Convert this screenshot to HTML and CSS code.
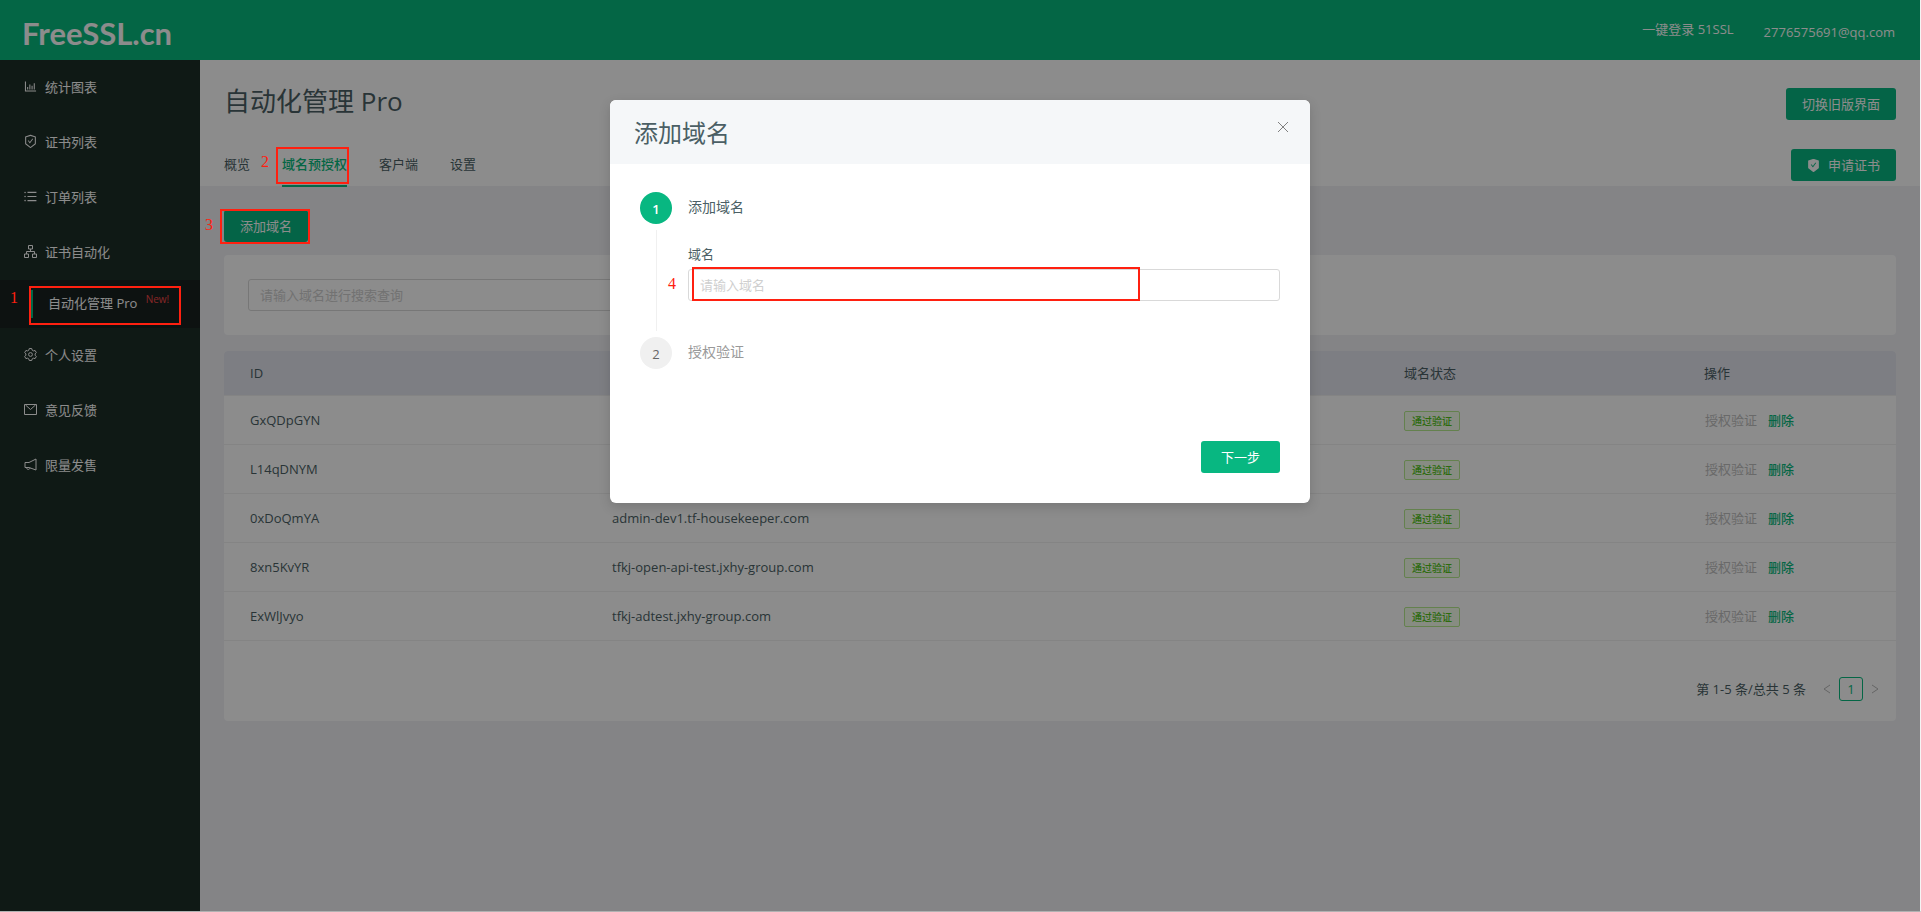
FILE: index.html
```
<!DOCTYPE html>
<html lang="zh-CN">
<head>
    <meta charset="UTF-8">
    <meta name="viewport" content="width=device-width, initial-scale=1.0">
    <title>自动化管理 Pro - FreeSSL.cn</title>
    <link rel="stylesheet" href="styles.css">
</head>
<body>
    <header class="top-nav">
        <a class="logo" href="#">FreeSSL.cn</a>
        <div class="top-links">
            <a class="login-link" href="#">一键登录 51SSL</a>
            <a class="user-link" href="#">2776575691@qq.com</a>
        </div>
    </header>

    <div class="layout">
        <nav class="sidebar">
            <a href="#">
                <svg class="icon" viewBox="64 64 896 896"><path d="M888 792H200V168c0-4-4-8-8-8h-56c-4 0-8 4-8 8v688c0 4 4 8 8 8h752c4 0 8-4 8-8v-56c0-4-4-8-8-8zM280 552h72v160h-72zM432 376h72v336h-72zM584 454h72v258h-72zM736 296h72v416h-72z"/></svg>
                统计图表
            </a>
            <a href="#">
                <svg class="icon" viewBox="64 64 896 896"><path d="M866.9 169.9L527.1 54.1C523 52.7 517.5 52 512 52s-11 .7-15.1 2.1L157.1 169.9c-8.3 2.8-15.1 12.4-15.1 21.2v482.4c0 8.8 5.7 20.4 12.6 25.9L499.3 968c3.5 2.7 8 4.1 12.6 4.1s9.2-1.4 12.6-4.1l344.7-268.6c6.9-5.4 12.6-17 12.6-25.9V191.1c.2-8.8-6.6-18.3-14.9-21.2zM810 654.3L512 886.5 214 654.3V226.7l298-101.6 298 101.6v427.6zm-405.8-201c-3-4.1-7.8-6.6-13-6.6H336c-6.500 0-10.300 7.400-6.500 12.700l126.400 174a16.100 16.100 0 0 0 26 0l212.600-292.700c3.800-5.300 0-12.700-6.500-12.700h-55.200c-5.100 0-10 2.500-13 6.600L468.900 542.400l-64.700-89.100z"/></svg>
                证书列表
            </a>
            <a href="#">
                <svg class="icon" viewBox="64 64 896 896"><path d="M304 192h616v72H304zM304 476h616v72H304zM304 760h616v72H304z"/><circle cx="136" cy="228" r="52"/><circle cx="136" cy="512" r="52"/><circle cx="136" cy="796" r="52"/></svg>
                订单列表
            </a>
            <a href="#">
                <svg class="icon icon-line" viewBox="0 0 13 13"><path d="M4.500 .5h4v3.500h-4zM.5 9h4v3.500h-4zM8.500 9h4v3.500h-4zM6.500 4v2.500M2.500 9V6.500h8V9"/></svg>
                证书自动化
            </a>
            <div class="sub-item">
                <a href="#">自动化管理 Pro <sup>New!</sup></a>
                <span class="mark mark-menu"></span>
                <span class="mark-no no-menu">1</span>
            </div>
            <a href="#">
                <svg class="icon icon-line" viewBox="0 0 13 13"><path d="M5.300 .5h2.400l.5 1.700 1.200.7 1.700-.4 1.200 2.100-1.200 1.300v1.300l1.200 1.300-1.200 2.100-1.700-.4-1.200.7-.5 1.600H5.300l-.5-1.600-1.200-.7-1.700.4-1.200-2.100 1.200-1.300V5.900L.7 4.600l1.200-2.100 1.700.4 1.200-.7z"/><circle cx="6.500" cy="6.500" r="1.900"/></svg>
                个人设置
            </a>
            <a href="#">
                <svg class="icon icon-line" viewBox="0 0 13 13"><path d="M.5 1.500h12v10H.5zM1.500 2l5 4.500 5-4.500"/></svg>
                意见反馈
            </a>
            <a href="#">
                <svg class="icon icon-line" viewBox="0 0 13 13"><path d="M12 1v11L5 9.500H1v-5h4zM2.500 9.500c0 2.300 3.200 2.600 3.500.4"/></svg>
                限量发售
            </a>
        </nav>

        <main class="main">
            <div class="page-head">
                <div class="title-row">
                    <h1>自动化管理 Pro</h1>
                    <button class="btn" type="button">切换旧版界面</button>
                </div>
                <div class="tab-row">
                    <div class="tabs">
                        <a href="#">概览</a>
                        <a class="active" href="#">域名预授权<span class="mark mark-tab"></span><span class="mark-no no-tab">2</span></a>
                        <a href="#">客户端</a>
                        <a href="#">设置</a>
                    </div>
                    <button class="btn" type="button">
                        <svg class="btn-icon" viewBox="64 64 896 896"><path fill-rule="evenodd" d="M866.9 169.9L527.1 54.1c-8-3-22-3-30.2 0L157.1 169.9c-8.3 2.8-15.1 12.4-15.1 21.2v482.4c0 8.8 5.7 20.4 12.6 25.9L499.3 968c7 5.500 18 5.500 25.200 0l344.700-268.600c6.900-5.400 12.600-17 12.600-25.900V191.100c.2-8.800-6.600-18.300-14.900-21.200zM694.500 340.700L481.900 633.400c-6 9-20 9-26 0l-126.400-174c-3.800-5.300 0-12.700 6.500-12.700h55.200c5.200 0 10 2.500 13 6.600l64.700 89.100 150.900-207.800c3-4.100 7.900-6.600 13-6.600H688c6.500 0 10.300 7.400 6.500 12.700z"/></svg>
                        申请证书
                    </button>
                </div>
            </div>

            <div class="content">
                <div class="toolbar">
                    <button class="btn" type="button">添加域名</button>
                    <span class="mark mark-add"></span>
                    <span class="mark-no no-add">3</span>
                </div>

                <div class="card search-card">
                    <input class="input search-input" type="text" placeholder="请输入域名进行搜索查询" aria-label="搜索域名">
                </div>

                <div class="card">
                    <table class="domain-table">
                        <colgroup>
                            <col class="col-id">
                            <col>
                            <col class="col-status">
                            <col class="col-action">
                        </colgroup>
                        <thead>
                            <tr><th>ID</th><th>域名</th><th>域名状态</th><th>操作</th></tr>
                        </thead>
                        <tbody>
                            <tr>
                                <td>GxQDpGYN</td>
                                <td></td>
                                <td><span class="tag">通过验证</span></td>
                                <td><div class="actions"><button type="button" disabled>授权验证</button><button type="button">删除</button></div></td>
                            </tr>
                            <tr>
                                <td>L14qDNYM</td>
                                <td></td>
                                <td><span class="tag">通过验证</span></td>
                                <td><div class="actions"><button type="button" disabled>授权验证</button><button type="button">删除</button></div></td>
                            </tr>
                            <tr>
                                <td>0xDoQmYA</td>
                                <td>admin-dev1.tf-housekeeper.com</td>
                                <td><span class="tag">通过验证</span></td>
                                <td><div class="actions"><button type="button" disabled>授权验证</button><button type="button">删除</button></div></td>
                            </tr>
                            <tr>
                                <td>8xn5KvYR</td>
                                <td>tfkj-open-api-test.jxhy-group.com</td>
                                <td><span class="tag">通过验证</span></td>
                                <td><div class="actions"><button type="button" disabled>授权验证</button><button type="button">删除</button></div></td>
                            </tr>
                            <tr>
                                <td>ExWlJvyo</td>
                                <td>tfkj-adtest.jxhy-group.com</td>
                                <td><span class="tag">通过验证</span></td>
                                <td><div class="actions"><button type="button" disabled>授权验证</button><button type="button">删除</button></div></td>
                            </tr>
                        </tbody>
                    </table>
                    <div class="pagination">
                        <span class="total">第 1-5 条/总共 5 条</span>
                        <button class="page-arrow" type="button" aria-label="上一页" disabled>
                            <svg viewBox="0 0 10 10"><path d="M8 1L2 5l6 4"/></svg>
                        </button>
                        <button class="page-no" type="button">1</button>
                        <button class="page-arrow" type="button" aria-label="下一页" disabled>
                            <svg viewBox="0 0 10 10"><path d="M2 1l6 4-6 4"/></svg>
                        </button>
                    </div>
                </div>
            </div>
        </main>
    </div>

    <!-- 添加域名弹窗 -->
    <div class="mask"></div>
    <div class="modal" role="dialog" aria-labelledby="modal-title">
        <div class="modal-head">
            <h2 id="modal-title">添加域名</h2>
            <button class="close" type="button" aria-label="关闭">
                <svg viewBox="0 0 12 12"><path d="M1 1l10 10M11 1L1 11"/></svg>
            </button>
        </div>
        <div class="modal-body">
            <div class="step">
                <div class="step-side">
                    <span class="step-no active">1</span>
                    <span class="step-line"></span>
                </div>
                <div class="step-main">
                    <div class="step-title">添加域名</div>
                    <div class="field">
                        <label for="domain">域名</label>
                        <input class="input" id="domain" type="text" placeholder="请输入域名">
                        <span class="mark mark-field"></span>
                        <span class="mark-no no-field">4</span>
                    </div>
                </div>
            </div>
            <div class="step">
                <div class="step-side"><span class="step-no">2</span></div>
                <div class="step-main"><div class="step-title waiting">授权验证</div></div>
            </div>
            <div class="modal-foot">
                <button class="btn btn-next" type="button">下一步</button>
            </div>
        </div>
    </div>
</body>
</html>
```
FILE: styles.css
```
/* Global */
* {
    box-sizing: border-box;
}

body {
    margin: 0;
    min-height: 100vh;
    position: relative;
    display: flex;
    flex-direction: column;
    background: #f0f1f4;
    color: #4b5f65;
    font-family: "Open Sans", "Noto Sans CJK SC", sans-serif;
    font-size: 13px;
    line-height: 20px;
    border-right: 1px solid #f4f4f4;
    border-bottom: 1px solid #b0b2b2;
}

a {
    color: inherit;
    text-decoration: none;
}

button,
input {
    font-family: inherit;
    font-size: 13px;
    line-height: 20px;
}

button {
    cursor: pointer;
}

h1,
h2 {
    margin: 0;
    font-weight: 400;
}

/* Top bar */
.top-nav {
    height: 60px;
    padding: 0 25px 0 22px;
    display: flex;
    align-items: center;
    justify-content: space-between;
    background: #08bb7e;
    color: #fff;
}

.logo {
    font-family: Lato, sans-serif;
    font-size: 31px;
    font-weight: 700;
    line-height: 60px;
    padding-top: 6px;
}

.top-links {
    display: flex;
    gap: 30px;
}

.user-link {
    padding-top: 3px;
}

.layout {
    flex: 1;
    display: flex;
}

/* Sidebar */
.sidebar {
    width: 200px;
    flex-shrink: 0;
    background: #1d2e27;
    color: #fff;
}

.sidebar > a {
    height: 55px;
    padding: 0 0 2px 24px;
    display: flex;
    align-items: center;
    gap: 8px;
}

.icon {
    width: 13px;
    height: 13px;
    fill: #fff;
    overflow: visible;
}

.icon-line {
    fill: none;
    stroke: #fff;
    stroke-width: 1;
}

.sub-item {
    position: relative;
    height: 48px;
    padding: 10px 0 10px 31px;
    background: #182120;
}

.sub-item a {
    display: block;
    height: 28px;
    padding-left: 15px;
    line-height: 26px;
    border-left: 2px solid #08bb7e;
}

.sub-item sup {
    margin-left: 5px;
    font-size: 10px;
    line-height: 10px;
    color: #f04848;
}

/* Page header */
.page-head {
    height: 126px;
    padding: 20px 24px 0;
    display: flex;
    flex-direction: column;
    justify-content: space-between;
    background: #fff;
}

.title-row,
.tab-row {
    display: flex;
    align-items: flex-start;
    justify-content: space-between;
}

.title-row .btn {
    margin-top: 8px;
}

h1 {
    font-size: 26px;
    line-height: 42px;
}

.tab-row {
    height: 37px;
}

.tabs {
    display: flex;
    gap: 32px;
}

.tabs a {
    position: relative;
    height: 38px;
    line-height: 30px;
}

.tabs .active {
    color: #08bb7e;
    font-weight: 500;
    border-bottom: 2px solid #08bb7e;
}

.btn {
    height: 32px;
    padding: 0 16px;
    border: none;
    border-radius: 3px;
    background: #08b781;
    color: #fff;
    display: flex;
    align-items: center;
    gap: 8px;
}

.btn-icon {
    width: 13px;
    height: 13px;
    fill: #fff;
}

/* Content */
.main {
    flex: 1;
    min-width: 0;
}

.content {
    padding: 24px;
}

.toolbar {
    position: relative;
    display: flex;
    margin-bottom: 13px;
}

.card {
    background: #fff;
    border-radius: 4px;
    overflow: hidden;
}

.search-card {
    padding: 24px;
    margin-bottom: 16px;
}

.input {
    display: block;
    width: 100%;
    height: 32px;
    padding: 0 11px;
    border: 1px solid #d9d9d9;
    border-radius: 3px;
    background: #fff;
}

.input::placeholder {
    color: #cfcfcf;
}

.search-input {
    max-width: 600px;
}

.domain-table {
    width: 100%;
    table-layout: fixed;
    border-collapse: separate;
    border-spacing: 0;
}

.col-id {
    width: 362px;
}

.col-status {
    width: 300px;
}

.col-action {
    width: 218px;
}

.domain-table th,
.domain-table td {
    padding: 0 26px;
    text-align: left;
    font-weight: 400;
    border-bottom: 1px solid #f0f0f0;
}

.domain-table th {
    height: 45px;
    background: #e4e5ee;
}

.domain-table td {
    height: 49px;
}

.tag {
    display: inline-block;
    padding: 0 7px;
    font-size: 10px;
    font-weight: 500;
    line-height: 18px;
    color: #52c41a;
    background: #f6ffed;
    border: 1px solid #b7eb8f;
    border-radius: 2px;
    vertical-align: middle;
}

.actions {
    display: flex;
    gap: 11px;
    padding-left: 1px;
}

.actions button {
    padding: 0;
    border: none;
    background: none;
    color: #08bb7e;
    font-weight: 500;
}

.actions button:disabled {
    color: #bfbfbf;
    font-weight: 400;
    cursor: not-allowed;
}

.pagination {
    display: flex;
    align-items: center;
    justify-content: flex-end;
    padding: 36px 15px 20px;
}

.total {
    margin-right: 9px;
}

.page-no {
    width: 24px;
    height: 24px;
    padding: 0;
    border: 1px solid #08bb7e;
    border-radius: 3px;
    background: #fff;
    color: #08bb7e;
}

.page-arrow {
    width: 24px;
    height: 24px;
    padding: 7px;
    border: none;
    background: none;
}

.page-arrow:last-child {
    width: 18px;
    padding: 7px 0 7px 7px;
}

.page-arrow svg {
    display: block;
    width: 10px;
    height: 10px;
    fill: none;
    stroke: #b8b8b8;
}

/* Modal */
.mask {
    position: absolute;
    inset: 0;
    z-index: 10;
    background: rgba(0, 0, 0, 0.45);
}

.modal {
    position: absolute;
    z-index: 11;
    top: 100px;
    left: 0;
    right: 0;
    margin: 0 auto;
    width: 700px;
    max-width: 100%;
    background: #fff;
    border-radius: 6px;
    box-shadow: 0 4px 12px rgba(0, 0, 0, 0.15);
}

.modal-head {
    height: 64px;
    padding: 0 20px 0 24px;
    display: flex;
    justify-content: space-between;
    background: #f5f7f9;
    border-radius: 6px 6px 0 0;
}

.modal-head h2 {
    font-size: 24px;
    line-height: 66px;
}

.close {
    align-self: flex-start;
    margin-top: 20px;
    padding: 1px;
    border: none;
    background: none;
}

.close svg {
    display: block;
    width: 12px;
    height: 12px;
    fill: none;
    stroke: #808080;
}

.modal-body {
    padding: 28px 30px 30px;
}

.step {
    display: flex;
    gap: 16px;
}

.step-side {
    width: 32px;
    display: flex;
    flex-direction: column;
    align-items: center;
}

.step-no {
    width: 32px;
    height: 32px;
    line-height: 34px;
    text-align: center;
    border-radius: 50%;
    background: #f0f0f0;
    color: #666;
}

.step-no.active {
    background: #08b781;
    color: #fff;
    font-weight: 600;
}

.step-line {
    flex: 1;
    width: 1px;
    margin: 6px 0;
    background: #f0f0f0;
}

.step-main {
    flex: 1;
}

.step-title {
    height: 32px;
    font-size: 14px;
    line-height: 30px;
}

.step-title.waiting {
    color: #999;
}

.field {
    position: relative;
    padding: 20px 0 36px;
}

.field label {
    display: block;
    height: 25px;
    line-height: 20px;
}

.modal-foot {
    display: flex;
    justify-content: flex-end;
    padding-top: 72px;
}

.btn-next {
    padding: 0 20px;
}

/* Red guide marks, drawn above the mask */
.mark {
    position: absolute;
    z-index: 20;
    border: 2px solid #ff2010;
}

.mark-no {
    position: absolute;
    z-index: 20;
    color: #ff2010;
    font: 16px/16px "Liberation Serif", serif;
}

.mark-menu {
    top: 6px;
    left: 29px;
    width: 152px;
    height: 39px;
}

.no-menu {
    top: 10px;
    left: 10px;
}

.mark-tab {
    top: -2px;
    left: -6px;
    right: -2px;
    height: 37px;
}

.no-tab {
    top: 5px;
    left: -21px;
}

.mark-add {
    top: -1px;
    left: -4px;
    width: 90px;
    height: 35px;
}

.no-add {
    top: 7px;
    left: -19px;
}

.mark-field {
    top: 43px;
    left: 4px;
    width: 448px;
    height: 34px;
}

.no-field {
    top: 52px;
    left: -20px;
}
```
